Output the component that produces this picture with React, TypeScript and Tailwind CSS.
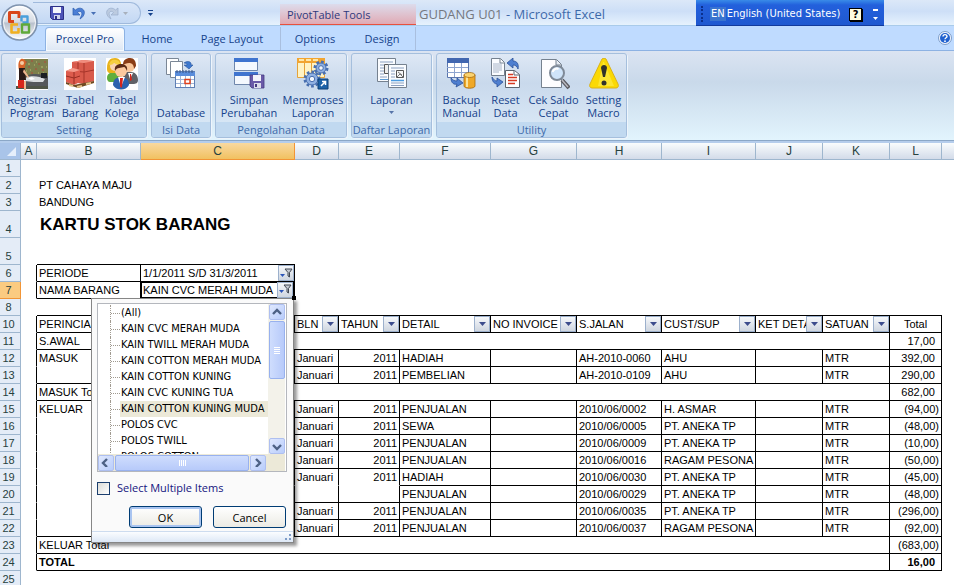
import React from "react";

const UI = "[font-family:'Open_Sans','Noto_Sans',sans-serif]";
const SHEET = "[font-family:'Liberation_Sans',Arial,sans-serif]";
const LIST = "[font-family:'DejaVu_Sans_Condensed','DejaVu_Sans',sans-serif]";

/* ---------- ribbon icons ---------- */

function RegisterIcon() {
  return (
    <svg width="32" height="32" viewBox="0 0 32 32" aria-hidden="true">
      <rect width="32" height="32" fill="#fff" />
      <rect x="7" y="1" width="25" height="20" fill="#7d7f4c" />
      <path d="M9 4h2M15 3h2M22 6h2M28 4h2M12 9h2M19 11h2M26 12h2M15 15h2M29 17h1" stroke="#b04a3a" />
      <path d="M12 6h2M18 7h1M25 9h2M10 13h1M22 15h1M30 9h1M14 12h1M20 4h1M27 15h1" stroke="#b8c070" />
      <path d="M10 18c6-3 15-2 22 0v13H10z" fill="#55585c" />
      <path d="M9 20c6-3 14-2 20 1l-2 3c-6 0-13 0-18-1z" fill="#d9dde0" />
      <path d="M12 20l4-1 3 2-4 1z" fill="#fff" />
      <path d="M25 15h6v5h-6z" fill="#1b1e22" />
      <path d="M0 31v-3h32v3z" fill="#4f5548" />
      <path d="M1 1h7v8H1z" fill="#fff" />
      <path d="M5 1c4-1 6 3 4 7l-1 4H3c-1-4-1-9 2-11z" fill="#d9642a" />
      <circle cx="6" cy="5" r="2" fill="#f5cba5" />
      <path d="M3 10h6l1 12H3z" fill="#2a1a18" />
      <path d="M8 11l5 8-1 1-5-6z" fill="#f0b890" />
      <path d="M2 22h6v8H2z" fill="#d8281c" />
      <path d="M8 23h2v9H8z" fill="#f0b890" />
    </svg>
  );
}

function BoxesIcon() {
  return (
    <svg width="32" height="32" viewBox="0 0 32 32" aria-hidden="true">
      <rect width="32" height="32" fill="#fff" />
      <path d="M8 4l11-2 11 1v20l-11 3-11-2z" fill="#d85a4b" />
      <path d="M8 4l11-2 11 1-10 2z" fill="#f08d7e" />
      <path d="M20 5v20M8 13l12 1 10-2M14 4v9" stroke="#a6352a" fill="none" />
      <path d="M2 13l7-3 7 2v12l-6 3-8-3z" fill="#dd5b4c" />
      <path d="M2 13l7-3 7 2-6 2z" fill="#f49a8b" />
      <path d="M10 14v12M2 18l8 2 6-2" stroke="#982d22" fill="none" />
      <path d="M2 24l8 3 20-4v2l-16 5-12-4z" fill="#6e4a22" />
      <path d="M5 27l4 1M13 29l5-1M22 26l5-1" stroke="#e7c58c" strokeWidth="2" />
    </svg>
  );
}

function PeopleIcon() {
  return (
    <svg width="32" height="32" viewBox="0 0 32 32" aria-hidden="true">
      <rect width="32" height="32" fill="#fff" />
      <path d="M1 20c0-5 4-6 8-6s7 2 7 6v4H4c-2 0-3-2-3-4z" fill="#5fae3e" />
      <path d="M1 10C1 3 4 0 9 0s7 4 6 12l-4 3H3c-2-1-2-3-2-5z" fill="#e8b21c" />
      <circle cx="9" cy="8" r="5" fill="#fbd5b0" />
      <path d="M3 7c1-5 4-6 7-5 3 0 4 3 4 5-4 0-5-2-6-2-1 1-2 2-5 2z" fill="#f6cf3f" />
      <path d="M17 18c1-4 4-5 8-4 4 0 7 3 7 8 0 3-2 4-5 4h-8z" fill="#5f6167" />
      <path d="M22 15l2 6 3-6z" fill="#fff" /><path d="M24 16h1l1 6-2 1z" fill="#d6261b" />
      <circle cx="23" cy="8" r="6" fill="#f9c79b" />
      <path d="M17 7c0-5 3-7 7-7s6 3 6 8l-2 3c0-4-2-6-5-6s-4 1-6 2z" fill="#8a3d16" />
      <path d="M7 27c0-6 4-8 8-8s8 2 8 8c-3 6-13 6-16 0z" fill="#2c62ae" />
      <path d="M12 19l3 10 4-10z" fill="#fff" /><path d="M14 20h3l-1 9-1 1-1-2z" fill="#d6261b" />
      <circle cx="15" cy="13" r="6" fill="#fbc99e" />
      <path d="M9 13c-1-5 2-7 6-7s7 2 6 7c-1-2-2-4-3-4-3 1-7 0-9 4z" fill="#5b2c17" />
    </svg>
  );
}

function DatabaseIcon() {
  return (
    <svg width="32" height="32" viewBox="0 0 32 32" aria-hidden="true">
      <g fill="#fff" stroke="#7b8796">
        <path d="M1.500 .5h12v16h-12z" /><path d="M5.500 3.500h12v16h-12z" />
      </g>
      <path d="M19 5c4-3 8-1 7 2l2 0-4 4-5-4h3c0-1-1-2-3-2z" fill="#3d78cf" stroke="#2a5499" strokeWidth=".6" />
      <rect x="10.500" y="13.500" width="19" height="16" fill="#fff" stroke="#5f7fb4" />
      <path d="M10 14h20v4H10z" fill="#5a8ddb" />
      <path d="M12 12v3M15 12v3M18 12v3M21 12v3M24 12v3M27 12v3" stroke="#35558c" />
      <path d="M11 21.500h18M11 25.500h18M15.500 18v11M20.500 18v11M25.500 18v11" stroke="#9fb4d6" />
      <rect x="20" y="21.500" width="5" height="4" fill="#fff" stroke="#e0401c" strokeWidth="1.500" />
    </svg>
  );
}

function SaveChangesIcon() {
  return (
    <svg width="32" height="32" viewBox="0 0 32 32" aria-hidden="true">
      <g fill="#f4f8fe" stroke="#6f86ab"><path d="M1.500 .5h23v12h-23z" /><path d="M1.500 14.500h23v12h-23z" /></g>
      <path d="M1 0h24v4H1zM1 14h24v4H1z" fill="#3f74cf" />
      <path d="M17 17h14v13H19l-2-2z" fill="#6a5aa8" stroke="#453a80" strokeWidth=".8" />
      <path d="M20 17h8v6h-8z" fill="#f3f3fa" /><path d="M21 25h7v5h-7z" fill="#dcdcea" /><path d="M22 26h2v3h-2z" fill="#453a80" />
    </svg>
  );
}

function Gear({ x, y, r }: { x: number; y: number; r: number }) {
  return (
    <g transform={`translate(${x} ${y})`}>
      <circle r={r} fill="none" stroke="#486fb0" strokeWidth="3" strokeDasharray="2.600 2" />
      <circle r={r - 1} fill="#8fb0e2" stroke="#486fb0" />
      <circle r={r / 2.600} fill="#f2f6fc" stroke="#486fb0" />
    </g>
  );
}

function ProcessIcon() {
  return (
    <svg width="32" height="32" viewBox="0 0 32 32" aria-hidden="true">
      <path d="M.5.500h27v19H.5z" fill="#fff3c4" stroke="#e5a33a" />
      <path d="M0 0h28v5H0z" fill="#f2a531" /><path d="M2 2h5M9 2h5M16 2h5" stroke="#ffe7a8" strokeWidth="2" />
      <path d="M7.500 5v14M14.500 5v14" stroke="#e5a33a" />
      <Gear x={24} y={10} r={6} />
      <Gear x={15} y={21} r={7} />
      <path d="M21 21h10v10H21z" fill="#1d62a8" stroke="#0f4177" />
      <path d="M24 28l4-4M25 23.500h3.500V27" stroke="#fff" strokeWidth="1.500" fill="none" />
    </svg>
  );
}

function ReportIcon() {
  return (
    <svg width="32" height="32" viewBox="0 0 32 32" aria-hidden="true">
      <path d="M1.500.500h18v23h-18z" fill="#fafcff" stroke="#75818f" />
      <path d="M4 4h13M4 7h4M4 10h4M4 13h4M4 16h4M4 19h7" stroke="#8ba0c0" /><path d="M4 21.500h8" stroke="#5b9ad4" />
      <path d="M8.500 6.500h5v9h-5z" fill="#eee" stroke="#555" />
      <path d="M12.500 6.500h18v23h-18z" fill="#fafcff" stroke="#75818f" />
      <path d="M15 10h13M15 13h4M15 16h4M15 19h4M15 25h13M15 27.500h13" stroke="#8ba0c0" /><path d="M15 22.500h13" stroke="#4c9be0" strokeWidth="1.500" />
      <path d="M20.500 12.500h7v7h-7z" fill="#f6f6f6" stroke="#555" /><path d="M21 19l3-3 3 3M22 14l4 3" stroke="#777" fill="none" />
    </svg>
  );
}

function BackupIcon() {
  return (
    <svg width="32" height="32" viewBox="0 0 32 32" aria-hidden="true">
      <path d="M1.500 .5h21v19h-21z" fill="#fff" stroke="#5b76ad" /><path d="M1 0h22v5H1z" fill="#4267b0" />
      <path d="M1 9.500h21M1 14.500h21M8.500 5v14M15.500 5v14" stroke="#8ea5cf" />
      <path d="M5 20c0 5 3 7 6 6l-1 3 7-4-6-5v3c-3 0-4-1-6-3z" fill="#4f7fd0" stroke="#2b529a" strokeWidth=".8" />
      <path d="M18 17v11c0 3 11 3 11 0V17z" fill="#efa827" stroke="#a56a10" strokeWidth=".8" />
      <path d="M20 18v11h2V18z" fill="#fce49a" />
      <ellipse cx="23.500" cy="17" rx="5.500" ry="2.500" fill="#fbd36f" stroke="#a56a10" strokeWidth=".8" />
    </svg>
  );
}

function ResetIcon() {
  return (
    <svg width="32" height="32" viewBox="0 0 32 32" aria-hidden="true">
      <path d="M1.500.500h9l4 4v13h-13z" fill="#fafcff" stroke="#75818f" /><path d="M10 1v4h4" fill="none" stroke="#75818f" />
      <path d="M3 6h9M3 8h9M3 10h9M3 12h9M3 14h6" stroke="#a7b4c8" />
      <path d="M15.500 12.500h9l5 4v13h-14z" fill="#fff" stroke="#5c6570" /><path d="M24 13v4h5" fill="none" stroke="#5c6570" />
      <path d="M18 16.500h5M18 19.500h9M18 22.500h9M18 25.500h7" stroke="#d63a22" strokeWidth="1.500" />
      <path d="M17 5l6-5v3c4 0 6 3 5 8-1-3-3-4-5-4v3z" fill="#4f7fd0" stroke="#2b529a" strokeWidth=".8" />
      <path d="M2 19c0 5 3 7 5 7v3l6-5-6-4v3c-2 0-3-1-5-4z" fill="#4f7fd0" stroke="#2b529a" strokeWidth=".8" />
    </svg>
  );
}

function SearchSheetIcon() {
  return (
    <svg width="32" height="32" viewBox="0 0 32 32" aria-hidden="true">
      <path d="M3.500 1.500h15l5 5v23h-20z" fill="#fdfdff" stroke="#75818f" /><path d="M18 2v5h5" fill="#e4eaf2" stroke="#75818f" />
      <path d="M24 22l7 8" stroke="#5a5a60" strokeWidth="4" /><path d="M24 22l6 7" stroke="#b9b9c0" strokeWidth="1.500" />
      <circle cx="19" cy="15" r="7" fill="#cfe4fa" stroke="#7f8a98" strokeWidth="2" />
      <path d="M14.500 14c1-3 4-4 6-3" stroke="#fff" strokeWidth="2" fill="none" />
    </svg>
  );
}

function WarningIcon() {
  return (
    <svg width="32" height="32" viewBox="0 0 32 32" aria-hidden="true">
      <path d="M14 1c1-1 3-1 4 0l12 25c1 2 0 4-2 4H4c-2 0-3-2-2-4z" fill="#fbd905" stroke="#d9b21a" />
      <path d="M15 4h1l10 24H10z" fill="#ffee52" opacity=".6" />
      <path d="M13 10c0-4 6-4 6 0l-2 9h-2z" fill="#33332a" /><circle cx="16" cy="25" r="2.500" fill="#33332a" />
    </svg>
  );
}

/* ---------- ribbon ---------- */

type Tool = { lines: string[]; icon: React.ReactNode; width: string; menu?: boolean };

const groups: { title: string; width: string; tools: Tool[] }[] = [
  {
    title: "Setting",
    width: "w-[146px]",
    tools: [
      { lines: ["Registrasi", "Program"], icon: <RegisterIcon />, width: "w-14" },
      { lines: ["Tabel", "Barang"], icon: <BoxesIcon />, width: "w-10" },
      { lines: ["Tabel", "Kolega"], icon: <PeopleIcon />, width: "w-11" },
    ],
  },
  { title: "Isi Data", width: "w-[60px]", tools: [{ lines: ["", "Database"], icon: <DatabaseIcon />, width: "w-14" }] },
  {
    title: "Pengolahan Data",
    width: "w-[132px]",
    tools: [
      { lines: ["Simpan", "Perubahan"], icon: <SaveChangesIcon />, width: "w-16" },
      { lines: ["Memproses", "Laporan"], icon: <ProcessIcon />, width: "w-16" },
    ],
  },
  { title: "Daftar Laporan", width: "w-[81px]", tools: [{ lines: ["Laporan"], icon: <ReportIcon />, width: "w-20", menu: true }] },
  {
    title: "Utility",
    width: "w-[191px]",
    tools: [
      { lines: ["Backup", "Manual"], icon: <BackupIcon />, width: "w-12" },
      { lines: ["Reset", "Data"], icon: <ResetIcon />, width: "w-10" },
      { lines: ["Cek Saldo", "Cepat"], icon: <SearchSheetIcon />, width: "w-14" },
      { lines: ["Setting", "Macro"], icon: <WarningIcon />, width: "w-11" },
    ],
  },
];

function Caret({ color = "#15428b" }: { color?: string }) {
  return (
    <svg width="5" height="3" viewBox="0 0 5 3" aria-hidden="true">
      <path d="M0 0h5L2.500 3z" fill={color} />
    </svg>
  );
}

function Ribbon() {
  return (
    <div className="flex h-[89px] gap-1 bg-linear-to-b from-[#dbe4f2] via-[#c9d9ea] via-35% to-[#e2f4fd] px-px pt-[2px]">
      {groups.map((g) => (
        <section key={g.title} aria-label={g.title} className={`${g.width} flex h-[85px] shrink-0 flex-col overflow-hidden rounded-[3px] border border-[#a5bfdd] bg-linear-to-b from-[#dee8f5] via-[#c9d9ec] via-35% to-[#dcebf8] shadow-[1px_1px_0_#eef5fc]`}>
          <div className="flex flex-1 justify-center">
            {g.tools.map((t) => (
              <button key={t.lines.join(" ")} type="button" className={`${t.width} flex flex-col items-center whitespace-nowrap pt-1 leading-[13px]`}>
                {t.icon}
                <span className="flex flex-col items-center pt-[3px]">
                  {t.lines.map((l, i) => <span key={i} className="block h-[13px]">{l}</span>)}
                  {t.menu && <span className="flex h-[13px] items-center"><Caret color="#5674a8" /></span>}
                </span>
              </button>
            ))}
          </div>
          <div className="flex h-[15px] shrink-0 justify-center whitespace-nowrap bg-[#c1d9f0] leading-[15px] text-[#3e6aaa]">{g.title}</div>
        </section>
      ))}
    </div>
  );
}

function OfficeButton() {
  return (
    <button type="button" aria-label="Office" className="absolute left-px top-1 z-10">
      <svg width="37" height="37" viewBox="0 0 37 37" aria-hidden="true">
        <defs>
          <linearGradient id="orb" x1="0" y1="0" x2="0" y2="1">
            <stop offset="0" stopColor="#fdfdfe" /><stop offset=".48" stopColor="#d5dae2" />
            <stop offset=".52" stopColor="#b9c1cd" /><stop offset="1" stopColor="#fff" />
          </linearGradient>
        </defs>
        <circle cx="18.500" cy="18.500" r="17.500" fill="url(#orb)" stroke="#7f93ae" strokeWidth="1.500" />
        <circle cx="18.500" cy="18.500" r="16" fill="none" stroke="#fff" opacity=".8" />
        <g fill="none" strokeLinejoin="round">
          <path d="M13 17.500H8.500V8.500h9.500V14" stroke="#d9461a" strokeWidth="3" />
          <path d="M20.500 17.500v-5h6v6h-5" stroke="#4aa0dc" strokeWidth="2.400" />
          <path d="M17 20.500h-6.500v8h7V24" stroke="#f0b020" strokeWidth="2.600" />
          <path d="M21 20.500h7v8h-7z" stroke="#5fa93a" strokeWidth="2.400" />
        </g>
      </svg>
    </button>
  );
}

function TitleBar() {
  return (
    <header className="flex h-[26px] items-stretch border-b border-[#a9cbea] bg-linear-to-b from-[#dce8f8] via-[#cddff7] via-45% to-[#e6f2fd]">
      <div className="my-[2px] ml-[33px] flex h-[22px] w-[108px] items-center rounded-r-full border border-l-0 border-[#9fb9dc] bg-linear-to-b from-[#d9e6f8] to-[#c3d8f4] pl-[17px]">
        <button type="button" aria-label="Save">
          <svg width="14" height="14" viewBox="0 0 14 14" aria-hidden="true">
            <path d="M.5.500h13v13h-11l-2-2z" fill="#4d54b8" stroke="#2b2f86" />
            <path d="M3 1h8v6H3z" fill="#f4f6fc" /><path d="M4 9h6v4H4z" fill="#cfd4ea" /><path d="M5 10h2v3H5z" fill="#2b2f86" />
          </svg>
        </button>
        <button type="button" aria-label="Undo" className="ml-2 flex items-center gap-1">
          <svg width="15" height="13" viewBox="0 0 15 13" aria-hidden="true">
            <path d="M1 1v7h7L5.500 5.500C8 3 11 5 9.500 8.500L8 12c5-3 5.500-8 2.500-10C8.500.500 5.500 1 3.500 3z" fill="#4b7fd6" stroke="#2c5bad" strokeWidth=".7" />
          </svg>
          <Caret color="#4870b5" />
        </button>
        <button type="button" aria-label="Redo" className="ml-2 flex items-center gap-1">
          <svg width="15" height="13" viewBox="0 0 15 13" aria-hidden="true">
            <path d="M14 1v7H7l2.500-2.500C7 3 4 5 5.500 8.500L7 12C2 9 1.500 4 4.500 2c2-1.500 5-1 7 1z" fill="#bccbe0" stroke="#9aaecb" strokeWidth=".7" />
          </svg>
          <Caret color="#a8b0bc" />
        </button>
      </div>
      <button type="button" aria-label="Customize Quick Access Toolbar" className="ml-[7px] flex flex-col items-center justify-center gap-[2px]">
        <span className="h-px w-[5px] bg-[#15428b]" /><Caret />
      </button>
      <div className="ml-[127px] mt-1 w-[136px] border-b border-[#e8503f] bg-linear-to-b from-[#dcdcec] to-[#e0aab4] pl-[7px] text-[11px] leading-[22px] text-[#2f3a7c]">PivotTable Tools</div>
      <h1 className="ml-[3px] whitespace-nowrap text-[13px] leading-[29px] text-[#3e6aaa]"><span className="text-[#75787f]">GUDANG U01</span> - Microsoft Excel</h1>
    </header>
  );
}

function LanguageBar() {
  return (
    <div className={`${LIST} absolute right-[70px] top-0 z-10 flex h-[26px] w-[188px] items-center border-b border-[#123a9c] bg-linear-to-b from-[#3a8be8] via-[#2360dc] via-20% to-[#1f58d0] pt-[3px] text-[11px] leading-[14px] text-white`}>
      <span className="ml-[3px] h-4 w-1 border-r-2 border-dotted border-[#0b2f8c]" />
      <span className="ml-[7px] bg-[#3a74cf] px-px">EN</span>
      <span className="ml-px whitespace-nowrap">English (United States)</span>
      <button type="button" aria-label="Help" className="ml-auto h-[13px] w-[13px] border border-black bg-[#fffde0] text-center text-[11px] font-bold leading-[11px] text-black shadow-[1px_1px_0_#000]">?</button>
      <button type="button" aria-label="Language options" className="ml-[11px] mr-[6px] flex flex-col items-center gap-[6px]">
        <span className="h-[2px] w-[5px] bg-white" /><Caret color="#fff" />
      </button>
    </div>
  );
}

function Tabs() {
  return (
    <nav className="flex h-[25px] items-end border-b border-[#8db2e3] bg-[#bfdbff] pl-[45px]">
      <button type="button" className="-mb-px h-6 w-20 rounded-t-[4px] border border-b-0 border-[#8db2e3] bg-linear-to-b from-white to-[#dde7f4] shadow-[inset_0_0_0_1px_#f4faff]">Proxcel Pro</button>
      <button type="button" className="h-[23px] w-16 pt-[2px]">Home</button>
      <button type="button" className="h-[23px] w-[86px] pt-[2px]">Page Layout</button>
      <div className="ml-[5px] flex h-[23px] border-x border-[#a9bfdf]">
        <button type="button" className="w-[68px] pt-[2px]">Options</button>
        <button type="button" className="w-[66px] pt-[2px]">Design</button>
      </div>
      <button type="button" aria-label="Help" className="mb-[5px] ml-auto mr-[2px]">
        <svg width="14" height="14" viewBox="0 0 14 14" aria-hidden="true">
          <circle cx="7" cy="7" r="6.500" fill="#f2f7ff" stroke="#7d9cc8" /><circle cx="7" cy="7" r="5" fill="#2262cf" />
          <path d="M5 5.500c0-2.500 4-2.500 4 0C9 7 7 6.500 7 8.300" fill="none" stroke="#fff" strokeWidth="1.400" /><circle cx="7" cy="10.200" r=".9" fill="#fff" />
        </svg>
      </button>
    </nav>
  );
}

/* ---------- filter popup ---------- */

const items = [
  "(All)", "KAIN CVC MERAH MUDA", "KAIN TWILL MERAH MUDA", "KAIN COTTON MERAH MUDA", "KAIN COTTON KUNING",
  "KAIN CVC KUNING TUA", "KAIN COTTON KUNING MUDA", "POLOS CVC", "POLOS TWILL", "POLOS COTTON",
];

const arrows = { up: "M1 6l4-4 4 4", down: "M1 3l4 4 4-4", left: "M6 1L2 5l4 4", right: "M3 1l4 4-4 4" };

function ScrollButton({ dir }: { dir: keyof typeof arrows }) {
  return (
    <button type="button" aria-label={`Scroll ${dir}`} className="flex h-4 w-4 shrink-0 items-center justify-center rounded-[2px] border border-[#aebff0] bg-linear-to-br from-[#dfe8fe] to-[#b9cdfb]">
      <svg width="10" height="9" viewBox="0 0 10 9" aria-hidden="true"><path d={arrows[dir]} fill="none" stroke="#4d6185" strokeWidth="2.400" /></svg>
    </button>
  );
}

function FilterPopup() {
  return (
    <div role="dialog" aria-label="NAMA BARANG" className={`${UI} absolute -left-[50px] top-full z-20 flex h-[245px] w-[203px] flex-col border border-[#868686] bg-[#fafafa] text-[11px] text-black shadow-[3px_3px_3px_rgba(0,0,0,0.4)]`}>
      <div className="ml-[5px] mr-[6px] mt-[4px] flex h-[169px] flex-col border border-[#b4b7bd] bg-white pr-px">
        <div className="flex min-h-0 flex-1">
          <ul className={`${LIST} min-w-0 flex-1 overflow-hidden pl-3 pt-px`}>
            {items.map((it) => (
              <li key={it} className="flex h-4 items-center border-l border-dotted border-[#a09a90]">
                <span className="w-[9px] shrink-0 border-t border-dotted border-[#a09a90]" />
                <button type="button" className={`flex-1 whitespace-nowrap pl-px text-left leading-4 ${it === "KAIN COTTON KUNING MUDA" ? "bg-[#ece9d8]" : ""}`}>{it}</button>
              </li>
            ))}
          </ul>
          <div className="flex w-[17px] flex-col items-center bg-[#f3f2ea]">
            <ScrollButton dir="up" />
            <div className="mt-px flex h-[58px] w-4 flex-col items-center justify-center gap-px rounded-[2px] border border-[#98b1ee] bg-linear-to-r from-[#cfddfd] to-[#b7cafa]">
              <span className="h-px w-1.5 bg-white" /><span className="h-px w-1.5 bg-white" /><span className="h-px w-1.5 bg-white" /><span className="h-px w-1.5 bg-white" />
            </div>
            <div className="mt-auto"><ScrollButton dir="down" /></div>
          </div>
        </div>
        <div className="flex h-[17px] items-center gap-px bg-[#ece9d8]">
          <ScrollButton dir="left" />
          <div className="flex h-4 flex-1 items-center justify-center gap-px rounded-[2px] border border-[#98b1ee] bg-linear-to-b from-[#cfddfd] to-[#b7cafa]">
            <span className="h-1.5 w-px bg-white" /><span className="h-1.5 w-px bg-white" /><span className="h-1.5 w-px bg-white" /><span className="h-1.5 w-px bg-white" />
          </div>
          <ScrollButton dir="right" />
          <span className="w-[18px]" />
        </div>
      </div>
      <div className="mt-2 flex items-center pl-[5px] text-[#14147e]">
        <input id="multi" type="checkbox" className="h-[13px] w-[13px] appearance-none border border-[#1c3f6e] bg-linear-to-br from-[#dcdcd7] to-white" />
        <label htmlFor="multi" className="pl-[7px] leading-4">Select Multiple Items</label>
      </div>
      <div className="mt-[10px] flex justify-end gap-[11px] pr-[7px]">
        <button type="button" className="h-[22px] w-[73px] rounded-[3px] border border-[#003c74] bg-linear-to-b from-white to-[#ecebe4] shadow-[inset_0_0_0_2px_#a9c4f0]">OK</button>
        <button type="button" className="h-[22px] w-[73px] rounded-[3px] border border-[#003c74] bg-linear-to-b from-white to-[#ecebe4]">Cancel</button>
      </div>
      <div className="mt-auto flex h-[11px] items-end justify-end border-t border-[#cddcef] bg-linear-to-b from-[#fbfdff] to-[#dde8f6] p-px">
        <svg width="8" height="8" viewBox="0 0 8 8" aria-hidden="true"><path d="M5 1h2v2H5zM1 5h2v2H1zM5 5h2v2H5z" fill="#7d9cc8" /></svg>
      </div>
    </div>
  );
}

/* ---------- worksheet ---------- */

function FilterButton({ label, active }: { label: string; active?: boolean }) {
  return (
    <button type="button" aria-label={`Filter ${label}`} className="-mt-px flex h-4 w-4 shrink-0 items-center justify-center border border-[#9cb0cc] bg-linear-to-b from-[#f6f8fb] to-[#cfd6e0]">
      {active ? (
        <svg width="13" height="11" viewBox="0 0 13 11" aria-hidden="true">
          <path d="M5 1h7L9.500 4.500V9L8 8V4.500z" fill="#c6cbd3" stroke="#3f4652" /><path d="M0 6h5L2.500 9z" fill="#2c55b8" />
        </svg>
      ) : (
        <svg width="7" height="4" viewBox="0 0 7 4" aria-hidden="true"><path d="M0 0h7L3.500 4z" fill="#3c4c8c" /></svg>
      )}
    </button>
  );
}

const columns = [
  ["A", "w-[16px]"], ["B", "w-[104px]"], ["C", "w-[154px]"], ["D", "w-[44px]"], ["E", "w-[61px]"], ["F", "w-[91px]"],
  ["G", "w-[86px]"], ["H", "w-[85px]"], ["I", "w-[94px]"], ["J", "w-[67px]"], ["K", "w-[67px]"], ["L", "w-[52px]"],
];

type CellProps = { children?: React.ReactNode; r?: boolean; b?: boolean; span?: number; align?: "left" | "right" | "center"; bold?: boolean };

function Cell({ children, r = true, b = true, span, align = "left", bold }: CellProps) {
  const side = align === "right" ? "justify-end pr-[2px]" : align === "center" ? "justify-center" : "pl-[2px]";
  return (
    <td colSpan={span} className={`border-b border-r p-0 ${r ? "border-r-black" : "border-r-transparent"} ${b ? "border-b-black" : "border-b-transparent"}`}>
      <div className={`flex h-4 items-center whitespace-nowrap pt-px ${side} ${bold ? "font-bold" : ""}`}>{children}</div>
    </td>
  );
}

function RowHead({ n, tall, active }: { n: number; tall?: boolean; active?: boolean }) {
  return (
    <th scope="row" className={`border-b border-r p-0 font-normal ${active ? "border-[#f29536] bg-[#fbcb81]" : "border-[#9eb6ce] bg-[#e4ecf7]"}`}>
      <div className={`flex items-end justify-center pr-[3px] leading-[15px] text-[#27413e] ${tall ? "h-[26px]" : "h-4"}`}>{n}</div>
    </th>
  );
}

function Amount({ v, bold }: { v: string; bold?: boolean }) {
  return <Cell align="right" bold={bold}><span className={v.startsWith("(") ? "" : "pr-1"}>{v}</span></Cell>;
}

const headings: [string, string][] = [
  ["PERINCIAN", "B"], ["KAIN", "C"], ["BLN", "D"], ["TAHUN", "E"], ["DETAIL", "F"], ["NO INVOICE", "G"],
  ["S.JALAN", "H"], ["CUST/SUP", "I"], ["KET DETAIL", "J"], ["SATUAN", "K"],
];

type Line = [n: number, kind: string, month: string, year: string, detail: string, ref: string, party: string, total: string];
const incoming: Line[] = [
  [12, "MASUK", "Januari", "2011", "HADIAH", "AH-2010-0060", "AHU", "392,00"],
  [13, "", "Januari", "2011", "PEMBELIAN", "AH-2010-0109", "AHU", "290,00"],
];
const outgoing: Line[] = [
  [15, "KELUAR", "Januari", "2011", "PENJUALAN", "2010/06/0002", "H. ASMAR", "(94,00)"],
  [16, "", "Januari", "2011", "SEWA", "2010/06/0005", "PT. ANEKA TP", "(48,00)"],
  [17, "", "Januari", "2011", "PENJUALAN", "2010/06/0009", "PT. ANEKA TP", "(10,00)"],
  [18, "", "Januari", "2011", "PENJUALAN", "2010/06/0016", "RAGAM PESONA", "(50,00)"],
  [19, "", "Januari", "2011", "HADIAH", "2010/06/0030", "PT. ANEKA TP", "(45,00)"],
  [20, "", "", "", "PENJUALAN", "2010/06/0029", "PT. ANEKA TP", "(48,00)"],
  [21, "", "Januari", "2011", "PENJUALAN", "2010/06/0035", "PT. ANEKA TP", "(296,00)"],
  [22, "", "Januari", "2011", "PENJUALAN", "2010/06/0037", "RAGAM PESONA", "(92,00)"],
];

function Lines({ rows }: { rows: Line[] }) {
  return (
    <>
      {rows.map(([n, kind, month, year, detail, ref, party, total], i) => {
        const last = i === rows.length - 1;
        const closed = last || rows[i + 1][2] !== "";
        return (
          <tr key={n}>
            <RowHead n={n} /><Cell b={false} />
            <Cell b={last}>{kind}</Cell><Cell b={closed} />
            <Cell b={closed}>{month}</Cell><Cell b={closed} align="right">{year}</Cell>
            <Cell>{detail}</Cell><Cell /><Cell>{ref}</Cell><Cell>{party}</Cell><Cell /><Cell>MTR</Cell><Amount v={total} />
          </tr>
        );
      })}
    </>
  );
}

function Summary({ n, label, total, bold }: { n: number; label: string; total: string; bold?: boolean }) {
  return <tr><RowHead n={n} /><Cell b={false} /><Cell span={10} bold={bold}>{label}</Cell><Amount v={total} bold={bold} /></tr>;
}

function Sheet() {
  return (
    <table className={`${SHEET} w-full table-fixed border-separate border-spacing-0 bg-white text-[11px] leading-[15px] text-black`}>
      <colgroup>
        <col className="w-[21px]" />
        {columns.map(([c, w]) => <col key={c} className={w} />)}
        <col />
      </colgroup>
      <thead>
        <tr className="text-[12px] text-[#27413e]">
          <td className="border-b border-r border-[#9eb6ce] bg-[#a9c4e9] p-0">
            <svg className="ml-auto mr-1" width="9" height="9" viewBox="0 0 9 9" aria-hidden="true"><path d="M9 0v9H0z" fill="#e6effb" /></svg>
          </td>
          {columns.map(([c]) => (
            <th key={c} scope="col" className={`h-[17px] border-b border-r p-0 pt-px font-normal ${c === "C" ? "border-[#f29536] bg-linear-to-b from-[#f9d99f] to-[#f1c15f]" : "border-[#9eb6ce] bg-linear-to-b from-[#f9fcfd] to-[#d3dbe9]"}`}>{c}</th>
          ))}
          <td className="border-b border-[#9eb6ce] bg-linear-to-b from-[#f9fcfd] to-[#d3dbe9] p-0" />
        </tr>
      </thead>
      <tbody>
        <tr><RowHead n={1} /><td colSpan={12} /></tr>
        <tr><RowHead n={2} /><td /><Cell r={false} b={false}>PT CAHAYA MAJU</Cell></tr>
        <tr><RowHead n={3} /><td /><Cell r={false} b={false}>BANDUNG</Cell></tr>
        <tr><RowHead n={4} tall /><td /><Cell r={false} b={false} span={2}><span className="pl-px text-[17px] font-bold">KARTU STOK BARANG</span></Cell></tr>
        <tr><RowHead n={5} tall /><td /><td colSpan={2} className="border-b border-black" /></tr>
        <tr>
          <RowHead n={6} /><Cell b={false} /><Cell>PERIODE</Cell>
          <Cell><span className="flex-1">1/1/2011 S/D 31/3/2011</span><FilterButton label="PERIODE" active /></Cell>
        </tr>
        <tr>
          <RowHead n={7} active /><Cell b={false} /><Cell>NAMA BARANG</Cell>
          <td className="relative border-b border-r border-black p-0">
            <div className="flex h-4 items-center whitespace-nowrap border border-black pl-px">
              <span className="min-w-0 flex-1">KAIN CVC MERAH MUDA</span><FilterButton label="NAMA BARANG" active />
            </div>
            <span className="absolute -bottom-[2px] -right-[2px] z-30 h-1 w-1 bg-black" />
            <FilterPopup />
          </td>
        </tr>
        <tr><RowHead n={8} /><td /><td colSpan={11} className="border-b border-black" /></tr>
        <tr>
          <RowHead n={10} /><Cell b={false} />
          {headings.map(([h, c]) => (
            <Cell key={c}><span className="min-w-0 flex-1 overflow-hidden">{h}</span><FilterButton label={h} /></Cell>
          ))}
          <Cell align="center">Total</Cell>
        </tr>
        <Summary n={11} label="S.AWAL" total="17,00" />
        <Lines rows={incoming} />
        <Summary n={14} label="MASUK Total" total="682,00" />
        <Lines rows={outgoing} />
        <Summary n={23} label="KELUAR Total" total="(683,00)" />
        <Summary n={24} label="TOTAL" total="16,00" bold />
        <tr><RowHead n={25} /><td colSpan={12} /></tr>
      </tbody>
    </table>
  );
}

export default function App() {
  return (
    <main className={`${UI} relative h-screen overflow-hidden bg-white text-[11px] text-[#15428b]`}>
      <OfficeButton />
      <LanguageBar />
      <TitleBar />
      <Tabs />
      <Ribbon />
      <div className="h-[3px] border-t border-[#8ba7c7] bg-[#b5cdec]" />
      <Sheet />
    </main>
  );
}
